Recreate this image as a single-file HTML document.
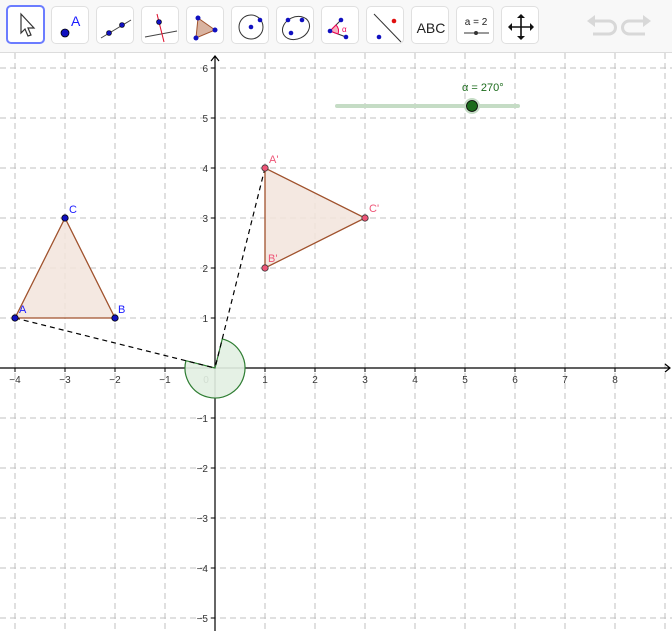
<!DOCTYPE html>
<html><head><meta charset="utf-8"><style>
body{margin:0;width:672px;height:631px;overflow:hidden;background:#fff;font-family:"Liberation Sans",sans-serif}
#tb{position:absolute;left:0;top:0;width:672px;height:52px;background:#f8f8f8;border-bottom:1px solid #dcdcdc}
.b{position:absolute;top:6px;width:38px;height:38px;background:#fff;border:1px solid #e0e0e0;border-radius:5px;box-sizing:border-box}
.b svg{position:absolute;left:0;top:0}
#cv{position:absolute;left:0;top:53px}
</style></head><body>
<div id="tb">
<div class="b" style="left:6px;border:2px solid #6b7cff;width:39px;height:39px;top:5px"><svg width="36" height="36"><path d="M13 7 L13 26 L17 22 L20 29 L23 28 L20 21 L26 21 Z" fill="#fff" stroke="#333" stroke-width="1.2"/></svg></div>
<div class="b" style="left:51px"><svg width="38" height="38"><circle cx="13" cy="26" r="4" fill="#1010c0" stroke="#000" stroke-width=".8"/><text x="19" y="19" fill="#1a1aff" font-size="14" font-family="Liberation Sans">A</text></svg></div>
<div class="b" style="left:96px"><svg width="38" height="38"><line x1="4" y1="31" x2="34" y2="13" stroke="#444"/><circle cx="12" cy="26" r="2.5" fill="#1010c0" stroke="#000" stroke-width=".6"/><circle cx="25" cy="18" r="2.5" fill="#1010c0" stroke="#000" stroke-width=".6"/></svg></div>
<div class="b" style="left:141px"><svg width="38" height="38"><line x1="3" y1="30" x2="35" y2="24" stroke="#444"/><line x1="15" y1="7" x2="22" y2="35" stroke="#e0102f"/><circle cx="17" cy="15" r="2.5" fill="#1010c0" stroke="#000" stroke-width=".6"/></svg></div>
<div class="b" style="left:186px"><svg width="38" height="38"><path d="M11 11 L28 23 L9 31 Z" fill="#d9b3a0" stroke="#a0522d"/><circle cx="11" cy="11" r="2.5" fill="#1010c0"/><circle cx="28" cy="23" r="2.5" fill="#1010c0"/><circle cx="9" cy="31" r="2.5" fill="#1010c0"/></svg></div>
<div class="b" style="left:231px"><svg width="38" height="38"><circle cx="19" cy="20" r="12" fill="none" stroke="#333"/><circle cx="19" cy="20" r="2.3" fill="#1010c0"/><circle cx="28" cy="13" r="2.3" fill="#1010c0"/></svg></div>
<div class="b" style="left:276px"><svg width="38" height="38"><ellipse cx="19" cy="21" rx="14" ry="11" transform="rotate(-25 19 21)" fill="none" stroke="#333"/><circle cx="11" cy="13" r="2.3" fill="#1010c0"/><circle cx="25" cy="13" r="2.3" fill="#1010c0"/><circle cx="14" cy="26" r="2.3" fill="#1010c0"/></svg></div>
<div class="b" style="left:321px"><svg width="38" height="38"><path d="M8 24 L19 13 M8 24 L24 30" stroke="#333"/><path d="M8 24 L14 18 A8 8 0 0 1 16 27 Z" fill="#f5b5c0" stroke="#e05"/><text x="20" y="25" font-size="8" fill="#e05">α</text><circle cx="8" cy="24" r="2.3" fill="#1010c0"/><circle cx="19" cy="13" r="2.3" fill="#1010c0"/><circle cx="24" cy="30" r="2.3" fill="#1010c0"/></svg></div>
<div class="b" style="left:366px"><svg width="38" height="38"><line x1="7" y1="7" x2="34" y2="35" stroke="#333"/><circle cx="27" cy="14" r="2.3" fill="#e01010"/><circle cx="12" cy="30" r="2.3" fill="#1010c0"/></svg></div>
<div class="b" style="left:411px"><svg width="38" height="38"><text x="19" y="26" text-anchor="middle" font-size="14" fill="#222" font-family="Liberation Sans">ABC</text></svg></div>
<div class="b" style="left:456px"><svg width="38" height="38"><text x="19" y="18" text-anchor="middle" font-size="10" fill="#222" font-family="Liberation Sans">a = 2</text><line x1="7" y1="26" x2="32" y2="26" stroke="#333"/><circle cx="19" cy="26" r="2" fill="#333"/></svg></div>
<div class="b" style="left:501px"><svg width="38" height="38"><path d="M19 8V32M7 20H31" stroke="#111" stroke-width="1.6"/><path d="M19 7l-4 4h8zM19 33l-4-4h8zM6 20l4-4v8zM32 20l-4-4v8z" fill="#111"/></svg></div>
<svg style="position:absolute;left:585px;top:12px" width="80" height="28"><path d="M6 9 H24 A6 6 0 0 1 24 22 H8" fill="none" stroke="#d8d8d8" stroke-width="3"/><path d="M2 9 L10 3 L10 15 Z" fill="#d8d8d8"/><path d="M62 9 H44 A6 6 0 0 0 44 22 H60" fill="none" stroke="#d8d8d8" stroke-width="3"/><path d="M66 9 L58 3 L58 15 Z" fill="#d8d8d8"/></svg>
</div>
<svg id="cv" width="672" height="578" viewBox="0 53 672 578">
<g stroke="#c0c0c0" stroke-dasharray="6,4" stroke-width="1">
<line x1="15" y1="53" x2="15" y2="631"/><line x1="65" y1="53" x2="65" y2="631"/><line x1="115" y1="53" x2="115" y2="631"/><line x1="165" y1="53" x2="165" y2="631"/><line x1="265" y1="53" x2="265" y2="631"/><line x1="315" y1="53" x2="315" y2="631"/><line x1="365" y1="53" x2="365" y2="631"/><line x1="415" y1="53" x2="415" y2="631"/><line x1="465" y1="53" x2="465" y2="631"/><line x1="515" y1="53" x2="515" y2="631"/><line x1="565" y1="53" x2="565" y2="631"/><line x1="615" y1="53" x2="615" y2="631"/><line x1="665" y1="53" x2="665" y2="631"/>
<line x1="0" y1="68" x2="672" y2="68"/><line x1="0" y1="118" x2="672" y2="118"/><line x1="0" y1="168" x2="672" y2="168"/><line x1="0" y1="218" x2="672" y2="218"/><line x1="0" y1="268" x2="672" y2="268"/><line x1="0" y1="318" x2="672" y2="318"/><line x1="0" y1="418" x2="672" y2="418"/><line x1="0" y1="468" x2="672" y2="468"/><line x1="0" y1="518" x2="672" y2="518"/><line x1="0" y1="568" x2="672" y2="568"/><line x1="0" y1="618" x2="672" y2="618"/>
</g>
<g stroke="#000" stroke-width="1.2">
<line x1="0" y1="368" x2="670" y2="368"/><line x1="215" y1="56" x2="215" y2="631"/>
<path d="M211 61 L215 56 L219 61 M665 364 L670 368 L665 372" fill="none"/>
<g stroke-width="1"><line x1="15" y1="368" x2="15" y2="372"/><line x1="65" y1="368" x2="65" y2="372"/><line x1="115" y1="368" x2="115" y2="372"/><line x1="165" y1="368" x2="165" y2="372"/><line x1="265" y1="368" x2="265" y2="372"/><line x1="315" y1="368" x2="315" y2="372"/><line x1="365" y1="368" x2="365" y2="372"/><line x1="415" y1="368" x2="415" y2="372"/><line x1="465" y1="368" x2="465" y2="372"/><line x1="515" y1="368" x2="515" y2="372"/><line x1="565" y1="368" x2="565" y2="372"/><line x1="615" y1="368" x2="615" y2="372"/>
<line x1="211" y1="68" x2="215" y2="68"/><line x1="211" y1="118" x2="215" y2="118"/><line x1="211" y1="168" x2="215" y2="168"/><line x1="211" y1="218" x2="215" y2="218"/><line x1="211" y1="268" x2="215" y2="268"/><line x1="211" y1="318" x2="215" y2="318"/><line x1="211" y1="418" x2="215" y2="418"/><line x1="211" y1="468" x2="215" y2="468"/><line x1="211" y1="518" x2="215" y2="518"/><line x1="211" y1="568" x2="215" y2="568"/><line x1="211" y1="618" x2="215" y2="618"/></g>
</g>
<g font-size="10" fill="#333" font-family="Liberation Sans" text-anchor="middle">
<text x="15" y="383">−4</text><text x="65" y="383">−3</text><text x="115" y="383">−2</text><text x="165" y="383">−1</text><text x="206" y="383">0</text><text x="265" y="383">1</text><text x="315" y="383">2</text><text x="365" y="383">3</text><text x="415" y="383">4</text><text x="465" y="383">5</text><text x="515" y="383">6</text><text x="565" y="383">7</text><text x="615" y="383">8</text>
<g text-anchor="end"><text x="208" y="72">6</text><text x="208" y="122">5</text><text x="208" y="172">4</text><text x="208" y="222">3</text><text x="208" y="272">2</text><text x="208" y="322">1</text><text x="208" y="422">−1</text><text x="208" y="472">−2</text><text x="208" y="522">−3</text><text x="208" y="572">−4</text><text x="208" y="622">−5</text></g>
</g>
<path d="M215 368 L222.3 338.9 A30 30 0 1 1 185.9 360.7 Z" fill="#e2efe2" fill-opacity=".9" stroke="#2e7d32" stroke-width="1.2"/>
<g stroke="#000" stroke-width="1.2" stroke-dasharray="5,4"><line x1="15" y1="318" x2="215" y2="368"/><line x1="265" y1="168" x2="215" y2="368"/></g>
<path d="M15 318 L115 318 L65 218 Z" fill="#f2e4dc" fill-opacity=".85" stroke="#a0522d" stroke-width="1.3"/>
<path d="M265 168 L265 268 L365 218 Z" fill="#f2e4dc" fill-opacity=".85" stroke="#a0522d" stroke-width="1.3"/>
<g fill="#1010c0" stroke="#000" stroke-width=".8"><circle cx="15" cy="318" r="3.2"/><circle cx="115" cy="318" r="3.2"/><circle cx="65" cy="218" r="3.2"/></g>
<g fill="#ee5577" stroke="#333" stroke-width=".8"><circle cx="265" cy="168" r="3.2"/><circle cx="265" cy="268" r="3.2"/><circle cx="365" cy="218" r="3.2"/></g>
<g font-size="11" font-family="Liberation Sans" fill="#1a1aff"><text x="19" y="313">A</text><text x="118" y="313">B</text><text x="69" y="213">C</text></g>
<g font-size="11" font-family="Liberation Sans" fill="#ee5577"><text x="269" y="163">A'</text><text x="268" y="262">B'</text><text x="369" y="212">C'</text></g>
<line x1="337" y1="106" x2="518" y2="106" stroke="#c5dcc5" stroke-width="4" stroke-linecap="round"/>
<circle cx="472" cy="106" r="8" fill="#c5dcc5"/><circle cx="472" cy="106" r="5.5" fill="#1b6b1b" stroke="#000" stroke-width=".8"/>
<text x="462" y="91" font-size="11" fill="#1b6b1b" font-family="Liberation Sans">α = 270°</text>
</svg>
</body></html>
